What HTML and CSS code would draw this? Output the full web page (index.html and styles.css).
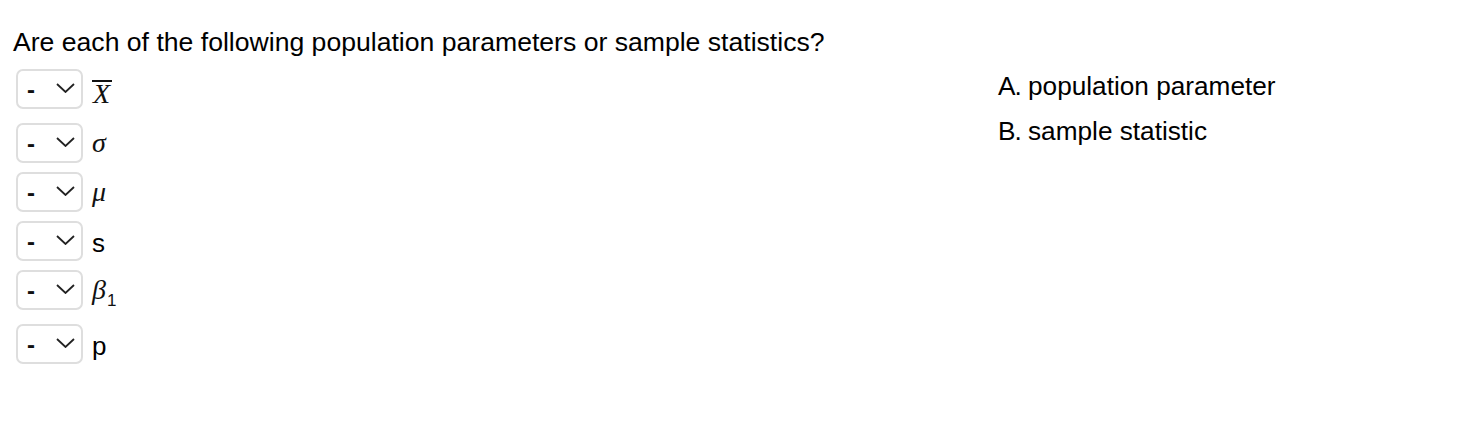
FILE: index.html
```html
<!DOCTYPE html>
<html>
<head>
<meta charset="utf-8">
<link rel="stylesheet" href="styles.css">
</head>
<body>
<div class="page">
  <p class="question">Are each of the following population parameters or sample statistics?</p>
  <div class="content">
    <div class="rows">
      <div class="row tall">
        <div class="select"><span class="dash">-</span><svg class="chev" width="19" height="10" viewBox="0 0 19 10"><path d="M1 1 L9.5 9 L18 1" fill="none" stroke="#222" stroke-width="1.8"/></svg></div>
        <span class="sym math"><span class="bar">X</span></span>
      </div>
      <div class="row">
        <div class="select"><span class="dash">-</span><svg class="chev" width="19" height="10" viewBox="0 0 19 10"><path d="M1 1 L9.5 9 L18 1" fill="none" stroke="#222" stroke-width="1.8"/></svg></div>
        <span class="sym math">σ</span>
      </div>
      <div class="row">
        <div class="select"><span class="dash">-</span><svg class="chev" width="19" height="10" viewBox="0 0 19 10"><path d="M1 1 L9.5 9 L18 1" fill="none" stroke="#222" stroke-width="1.8"/></svg></div>
        <span class="sym math">μ</span>
      </div>
      <div class="row">
        <div class="select"><span class="dash">-</span><svg class="chev" width="19" height="10" viewBox="0 0 19 10"><path d="M1 1 L9.5 9 L18 1" fill="none" stroke="#222" stroke-width="1.8"/></svg></div>
        <span class="sym plain">s</span>
      </div>
      <div class="row tall">
        <div class="select"><span class="dash">-</span><svg class="chev" width="19" height="10" viewBox="0 0 19 10"><path d="M1 1 L9.5 9 L18 1" fill="none" stroke="#222" stroke-width="1.8"/></svg></div>
        <span class="sym math"><span class="beta">β<sub class="sub">1</sub></span></span>
      </div>
      <div class="row">
        <div class="select"><span class="dash">-</span><svg class="chev" width="19" height="10" viewBox="0 0 19 10"><path d="M1 1 L9.5 9 L18 1" fill="none" stroke="#222" stroke-width="1.8"/></svg></div>
        <span class="sym plain">p</span>
      </div>
    </div>
    <div class="options">
      <div class="option"><span class="letter">A.</span> population parameter</div>
      <div class="option"><span class="letter">B.</span> sample statistic</div>
    </div>
  </div>
</div>
</body>
</html>
```
FILE: styles.css
```css
html, body {
  margin: 0;
  padding: 0;
  background: #fff;
}
body {
  margin: 8px;
  font-family: "Liberation Sans", Arial, Helvetica, sans-serif;
  color: #000;
}
.page {
  padding: 19px 0 0 5px;
}
.question {
  margin: 0;
  font-size: 26.6px;
  line-height: 30px;
}
.content {
  display: grid;
  grid-template-columns: 985px 1fr;
  margin-top: 12px;
}
.rows {
  display: flex;
  flex-direction: column;
  gap: 9px;
  padding-left: 3px;
}
.row {
  display: flex;
  align-items: flex-start;
  gap: 9px;
  height: 40px;
}
.row.tall {
  height: 45px;
}
.select {
  box-sizing: border-box;
  width: 67px;
  height: 40px;
  border: 2px solid #dedede;
  border-radius: 7px;
  display: flex;
  align-items: center;
  padding-left: 9px;
}
.dash {
  font-size: 24px;
  font-weight: bold;
  line-height: 1;
  color: #111;
  margin-top: 2px;
}
.chev {
  margin-left: auto;
  margin-right: 6px;
  margin-top: -2px;
}
.sym {
  height: 40px;
  display: flex;
  align-items: center;
}
.math {
  font-family: "Liberation Serif", "Times New Roman", serif;
  font-style: italic;
  font-size: 28px;
  color: #111;
}
.plain {
  font-size: 26px;
  padding-top: 2px;
}
.bar {
  display: inline-block;
  border-top: 2px solid #111;
  line-height: 22px;
  padding: 1px 2px 0 1px;
  margin-top: 6px;
}
.beta {
  line-height: 28px;
}
.sub {
  font-family: "Liberation Sans", Arial, sans-serif;
  font-style: normal;
  font-size: 17px;
  vertical-align: -7px;
  line-height: 0;
  margin-left: 1px;
}
.options {
  font-size: 26.2px;
  line-height: 30px;
  display: flex;
  flex-direction: column;
  gap: 15px;
  padding-top: 2px;
}
.letter {
  letter-spacing: -1px;
}
```
